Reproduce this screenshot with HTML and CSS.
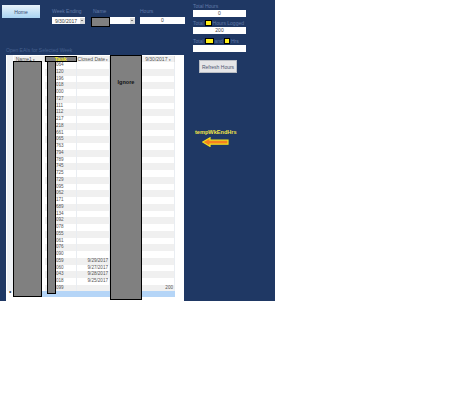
FILE: index.html
```html
<!DOCTYPE html>
<html lang="en">
<head>
<meta charset="utf-8">
<title>Hours</title>
<link rel="stylesheet" href="styles.css">
</head>
<body>
<div class="panel">
  <div class="left">
    <div class="top">
      <button class="home">Home</button>
      <div class="field week"><span class="lbl">Week Ending</span><div class="combo"><span>9/30/2017</span><i class="drop"></i></div></div>
      <div class="field name"><span class="lbl">Name</span><div class="namerow"><div class="redact namebox"></div><div class="combo namecombo"><span></span><i class="drop"></i></div></div></div>
      <div class="field hours"><span class="lbl">Hours</span><div class="box">0</div></div>
    </div>
    <div class="heading">Open EAIs for Selected Week</div>
    <div class="table">
      <div class="sheet">
        <div class="sel"><span class="star">*</span></div>
        <div class="col c1"><div class="hd">Name1 <b>▾</b></div></div>
        <div class="col c2"><div class="hd">Task</div>
          <div class="r">064</div><div class="r">120</div><div class="r">196</div><div class="r">018</div><div class="r">000</div><div class="r">727</div><div class="r">111</div><div class="r">112</div><div class="r">217</div><div class="r">218</div><div class="r">661</div><div class="r">065</div><div class="r">763</div><div class="r">794</div><div class="r">789</div><div class="r">745</div><div class="r">725</div><div class="r">729</div><div class="r">095</div><div class="r">062</div><div class="r">171</div><div class="r">689</div><div class="r">134</div><div class="r">092</div><div class="r">078</div><div class="r">055</div><div class="r">061</div><div class="r">076</div><div class="r">090</div><div class="r">059</div><div class="r">060</div><div class="r">043</div><div class="r">018</div><div class="r">099</div>
        </div>
        <div class="col c3"><div class="hd">Closed Date <b>▾</b></div>
          <div class="r"></div><div class="r"></div><div class="r"></div><div class="r"></div><div class="r"></div><div class="r"></div><div class="r"></div><div class="r"></div><div class="r"></div><div class="r"></div><div class="r"></div><div class="r"></div><div class="r"></div><div class="r"></div><div class="r"></div><div class="r"></div><div class="r"></div><div class="r"></div><div class="r"></div><div class="r"></div><div class="r"></div><div class="r"></div><div class="r"></div><div class="r"></div><div class="r"></div><div class="r"></div><div class="r"></div><div class="r"></div><div class="r"></div><div class="r dt">9/29/2017</div><div class="r dt">9/27/2017</div><div class="r dt">9/28/2017</div><div class="r dt">9/25/2017</div><div class="r"></div>
        </div>
        <div class="col c4"><div class="hd"></div></div>
        <div class="col c5"><div class="hd">9/30/2017 <b>▾</b></div>
          <div class="r"></div><div class="r"></div><div class="r"></div><div class="r"></div><div class="r"></div><div class="r"></div><div class="r"></div><div class="r"></div><div class="r"></div><div class="r"></div><div class="r"></div><div class="r"></div><div class="r"></div><div class="r"></div><div class="r"></div><div class="r"></div><div class="r"></div><div class="r"></div><div class="r"></div><div class="r"></div><div class="r"></div><div class="r"></div><div class="r"></div><div class="r"></div><div class="r"></div><div class="r"></div><div class="r"></div><div class="r"></div><div class="r"></div><div class="r"></div><div class="r"></div><div class="r"></div><div class="r"></div><div class="r dt">200</div>
        </div>
      </div>
      <div class="newrow"></div>
      <div class="redact rd-name"></div>
      <div class="redact rd-taskhead"><span>Task</span></div>
      <div class="redact rd-task"></div>
      <div class="redact rd-ignore"><span>Ignore</span></div>
    </div>
  </div>
  <div class="right">
    <div class="lbl">Total Hours</div>
    <div class="box rbox">0</div>
    <div class="lbl lbl2">Total <i class="mark m1"></i> Hours Logged</div>
    <div class="box rbox">200</div>
    <div class="lbl lbl2">Total <i class="mark m2"></i> and <i class="mark m3"></i> Hrs</div>
    <div class="box rbox"></div>
    <button class="refresh">Refresh Hours</button>
    <div class="temp">tempWkEndHrs</div>
    <svg class="arrow" viewBox="0 0 27 10" width="27" height="10"><path d="M.8 5 8 .8v2.4h18v4H8v2.2z" fill="#f5811f" stroke="#f3e21c" stroke-width="1.2"/></svg>
  </div>
</div>
</body>
</html>
```

FILE: styles.css
```css
html, body { margin: 0; padding: 0; background: #fff; }
body { width: 474px; height: 412px; overflow: hidden; font-family: "Liberation Sans", Arial, sans-serif; }
.panel { width: 275px; height: 301px; background: #1f3864; display: flex; overflow: hidden; }
.left { width: 185px; flex: none; }
.top { display: flex; height: 47.5px; padding: 5px 0 0 2px; box-sizing: border-box; align-items: flex-start; }
.home { width: 38px; height: 13px; padding: 0; border: 0; font: 5px "Liberation Sans", sans-serif; color: #33496e; background: linear-gradient(#e8f3fb, #a9d3f2); }
.lbl { display: block; font-size: 5px; line-height: 6px; color: #6079a6; white-space: nowrap; }
.field { display: flex; flex-direction: column; gap: 3px; padding-top: 3px; }
.week { width: 33px; margin-left: 12px; }
.name { width: 43px; margin-left: 7px; }
.hours { width: 45px; margin-left: 5px; }
.name .lbl { padding-left: 1px; }
.combo { height: 7px; background: #fff; display: flex; justify-content: flex-end; align-items: center; font-size: 5px; color: #444; position: relative; }
.combo span { flex: 1; text-align: center; white-space: nowrap; overflow: hidden; }
.drop { width: 5px; height: 6px; background: #ddd; position: relative; flex: none; }
.drop::after { content: ""; position: absolute; left: 1px; top: 2px; border: 1.5px solid transparent; border-top-color: #111; }
.namerow { display: flex; align-items: flex-start; margin-left: -1px; }
.namerow .namebox { position: static; width: 19px; height: 10px; flex: none; }
.namecombo { width: 25px; flex: none; }
.box { height: 7px; line-height: 7px; background: #fff; text-align: center; font-size: 5px; color: #444; }
.heading { height: 5px; line-height: 5px; margin-bottom: 2.5px; font-size: 5px; padding-left: 6px; color: #48628f; white-space: nowrap; }
.table { position: relative; margin-left: 6px; width: 178px; height: 246px; background: #fff; }
.sheet { display: flex; padding-left: 8px; position: relative; }
.sel { position: absolute; left: 1px; top: 0; width: 6px; height: 236px; background: #eef1f5; }
.star { position: absolute; left: 2px; top: 235px; font-size: 6px; line-height: 7px; color: #000; font-weight: bold; }
.col { flex: none; font-size: 4.6px; color: #555; }
.c1 { width: 31px; }
.c2 { width: 32px; }
.c3 { width: 33px; }
.c4 { width: 32px; }
.c5 { width: 33px; }
.hd { height: 6px; line-height: 6px; margin-top: 1px; background: #f0f0f0; border-right: 1px solid #ddd; box-sizing: border-box; text-align: center; white-space: nowrap; color: #555; font-size: 5px; }
.c1 .hd { padding-right: 7px; }
.hd b { font-size: 3px; font-weight: normal; color: #333; }
.r { height: 6.75px; line-height: 6.75px; background: #fff; padding: 0 1px 0 11px; box-sizing: border-box; border-right: 1px solid #e9edf2; white-space: nowrap; overflow: hidden; }
.r:nth-child(odd) { background: #f0f0f0; }
.r.dt { padding: 0 1px 0 0; text-align: right; }
.newrow { position: absolute; left: 8px; width: 161px; top: 236px; height: 6px; background: #b5d5f7; }
.redact { position: absolute; box-sizing: border-box; background: #808080; border: 1.5px solid #000; display: flex; align-items: center; justify-content: center; }
.rd-name { left: 7px; top: 6px; width: 29px; height: 236px; }
.rd-taskhead { left: 39px; top: 1px; width: 31.5px; height: 6px; }
.rd-taskhead span { font-size: 5.5px; color: #f4ea27; font-weight: bold; }
.rd-task { left: 40.5px; top: 6px; width: 9px; height: 233px; }
.rd-ignore { left: 104px; top: 0; width: 32px; height: 244.5px; align-items: flex-start; }
.rd-ignore span { margin-top: 23px; font-size: 5.5px; font-weight: bold; color: #111; }
.right { width: 53px; margin-left: 8px; padding-top: 2.5px; }
.rbox { margin-top: 1px; }
.lbl2 { height: 6px; display: flex; align-items: center; gap: 1px; }
.rbox + .lbl2 { margin-top: 3.5px; }
.mark { display: inline-block; background: #ffef1a; border: 1px solid #000; box-sizing: border-box; height: 6px; }
.m1 { width: 7px; }
.m2 { width: 9px; }
.m3 { width: 6px; }
.refresh { display: block; margin: 8.5px 0 0 6px; width: 38px; height: 13px; padding: 0; border: 1px solid #b9bdc4; background: #e6e6e8; color: #4a5570; font: 5px "Liberation Sans", sans-serif; }
.temp { margin: 56px 0 0 2px; font-size: 5.6px; line-height: 7px; font-weight: bold; color: #f3e547; white-space: nowrap; }
.arrow { display: block; margin: 1px 0 0 9px; }
```
